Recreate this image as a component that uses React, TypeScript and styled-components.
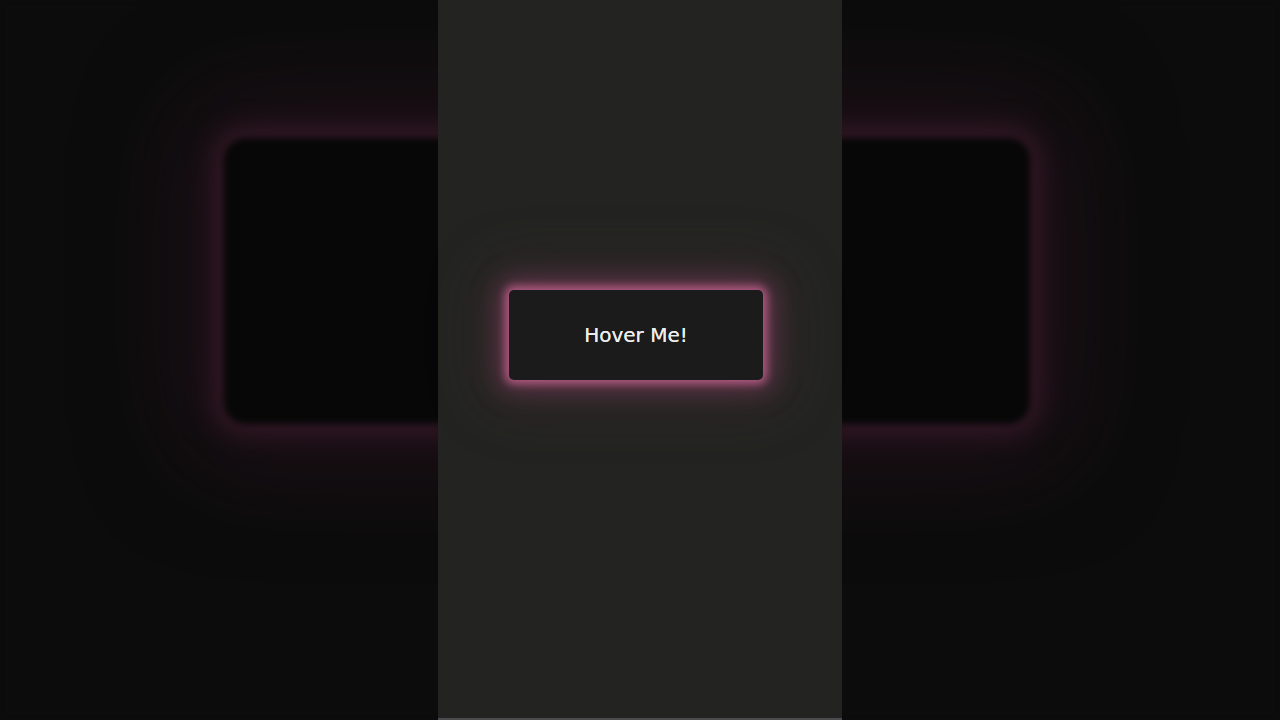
import React from "react";
import styled, { createGlobalStyle } from "styled-components";

const GlobalStyle = createGlobalStyle`
  html, body {
    margin: 0;
    padding: 0;
    background: #0c0c0c;
    font-family: "DejaVu Sans", Verdana, sans-serif;
  }
  #root {
    width: 1280px;
    height: 720px;
    overflow: hidden;
  }
`;

const Stage = styled.div`
  display: grid;
  width: 1280px;
  height: 720px;
  overflow: hidden;
`;

// blurred, enlarged copy of the frame filling the letterbox
const Backdrop = styled.div`
  grid-area: 1 / 1;
  display: flex;
  flex-direction: column;
  padding: 138px 250px 0 224px;
  background: #0c0c0c;
  filter: blur(3px);
`;

const BigCard = styled.div`
  width: 806px;
  height: 286px;
  border-radius: 22px;
  background: #070707;
  box-shadow: 0 0 24px 12px rgba(52, 24, 38, 0.9),
    0 0 100px 40px rgba(44, 20, 32, 0.55);
`;

const Foreground = styled.div`
  grid-area: 1 / 1;
  position: relative;
  z-index: 1;
  display: flex;
  justify-content: center;
`;

const Column = styled.div`
  width: 404px;
  height: 720px;
  box-sizing: border-box;
  background: #232421;
  border-bottom: 2px solid #4a4b4d;
  display: flex;
  flex-direction: column;
  align-items: center;
  padding-top: 290px;
`;

const GlowButton = styled.button`
  width: 254px;
  height: 90px;
  margin-right: 8px;
  border: none;
  border-radius: 5px;
  background: #1b1b1b;
  color: #ededed;
  font-family: "DejaVu Sans", Verdana, sans-serif;
  font-size: 20px;
  text-shadow: 0 0 0.6px #ededed;
  cursor: pointer;
  box-shadow: 0 0 8px 4px rgba(190, 95, 140, 0.85),
    0 0 26px 12px rgba(150, 70, 110, 0.45),
    0 0 60px 22px rgba(80, 45, 60, 0.3);
`;

export default function App(): React.JSX.Element {
  return (
    <>
      <GlobalStyle />
      <Stage>
        <Backdrop>
          <BigCard />
        </Backdrop>
        <Foreground>
          <Column>
            <GlowButton>Hover Me!</GlowButton>
          </Column>
        </Foreground>
      </Stage>
    </>
  );
}
